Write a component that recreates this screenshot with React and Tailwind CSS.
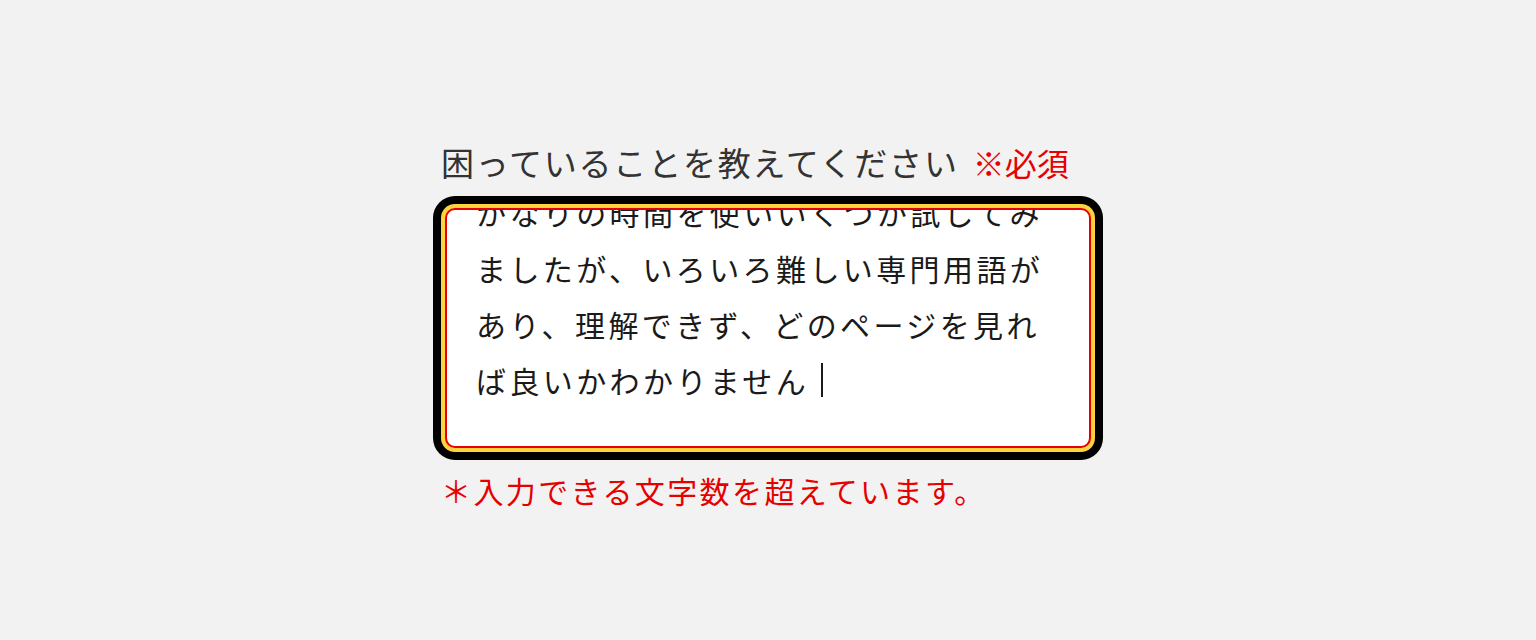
export default function App() {
  const lines = [
    "かなりの時間を使いいくつか試してみ",
    "ましたが、いろいろ難しい専門用語が",
    "あり、理解できず、どのページを見れ",
  ];
  return (
    <div
      className="w-full h-[640px] bg-[#f2f2f2] flex justify-center pt-[134px]"
      style={{ fontFamily: '"Noto Sans CJK JP", "Noto Sans", sans-serif' }}
    >
      <div className="w-[670px] flex flex-col">
        <div className="flex items-baseline pl-[8px] mb-[6px]">
          <span className="text-[33px] leading-[56px] tracking-[1.8px] text-[#333333]">
            困っていることを教えてください
          </span>
          <span className="ml-[14px] text-[32px] leading-[56px] text-[#e60000]">※必須</span>
        </div>
        <div className="rounded-[22px] bg-black p-[8px]">
          <div className="rounded-[14px] bg-[#ffd33d] p-[4px]">
            <div className="h-[240px] rounded-[10px] border-2 border-[#e60000] bg-white overflow-hidden">
              <div className="-mt-[26px] pl-[29px] text-[30px] leading-[56px] tracking-[3.4px] text-[#1a1a1a]">
                {lines.map((l) => (
                  <div key={l} className="whitespace-nowrap">{l}</div>
                ))}
                <div className="whitespace-nowrap flex items-center">
                  <span>ば良いかわかりません</span>
                  <span className="inline-block w-[2px] h-[34px] bg-[#1a1a1a] ml-[12px]"></span>
                </div>
              </div>
            </div>
          </div>
        </div>
        <div className="pl-[8px] mt-[9px] text-[30px] leading-[42px] tracking-[2.4px] text-[#e60000]">
          ＊入力できる文字数を超えています。
        </div>
      </div>
    </div>
  );
}
